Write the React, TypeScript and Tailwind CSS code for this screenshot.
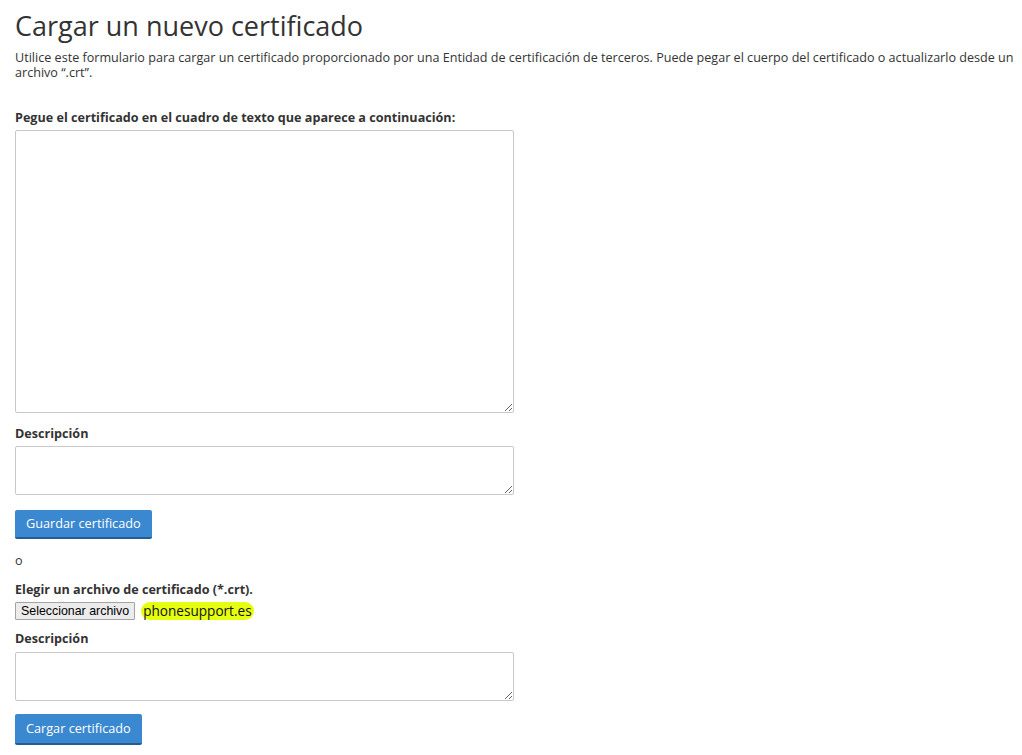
export default function App() {
  return (
    <div className="pl-[15px] pr-[4px] pt-[8px] font-['Open_Sans',sans-serif] text-[#333] bg-white min-h-screen">
      <h1 className="text-[27px] leading-[36px] font-normal text-[#333]">Cargar un nuevo certificado</h1>
      <p className="mt-[6px] text-[12.6px] leading-[15px] text-[#333]">
        Utilice este formulario para cargar un certificado proporcionado por una Entidad de certificación de terceros. Puede pegar el cuerpo del certificado o actualizarlo desde un archivo “.crt”.
      </p>

      <div className="mt-[29px] text-[12.6px] leading-[18px] font-bold">
        Pegue el certificado en el cuadro de texto que aparece a continuación:
      </div>
      <textarea className="mt-[3px] block w-[499px] h-[283px] border border-[#c8c8c8] rounded-[2px] outline-none" />

      <div className="mt-[12px] text-[12.6px] leading-[18px] font-bold">Descripción</div>
      <textarea className="mt-[3px] block w-[499px] h-[49px] border border-[#c8c8c8] rounded-[2px] outline-none" />

      <button className="mt-[15px] block h-[29px] px-[11px] bg-[#3a88cf] border-b-2 border-[#245d94] rounded-[2px] text-white text-[12.7px]">
        Guardar certificado
      </button>

      <div className="mt-[14px] text-[12.6px] leading-[16px]">o</div>

      <div className="mt-[12px] text-[12.6px] leading-[18px] font-bold">Elegir un archivo de certificado (*.crt).</div>
      <div className="mt-[3px] flex items-center gap-[6px]">
        <button className="h-[18px] px-[5px] bg-[#ececec] border border-[#a3a3a3] rounded-[1px] font-['Liberation_Sans',Arial,sans-serif] text-[12.4px] leading-[16px] text-black">
          Seleccionar archivo
        </button>
        <span className="bg-[#e6ff10] rounded-full px-[2px] text-[13.6px] leading-[18px] text-[#111]">phonesupport.es</span>
      </div>

      <div className="mt-[10px] text-[12.6px] leading-[18px] font-bold">Descripción</div>
      <textarea className="mt-[4px] block w-[499px] h-[49px] border border-[#c8c8c8] rounded-[2px] outline-none" />

      <button className="mt-[13px] block h-[31px] px-[11px] bg-[#3a88cf] border-b-2 border-[#245d94] rounded-[2px] text-white text-[12.7px]">
        Cargar certificado
      </button>
    </div>
  );
}
